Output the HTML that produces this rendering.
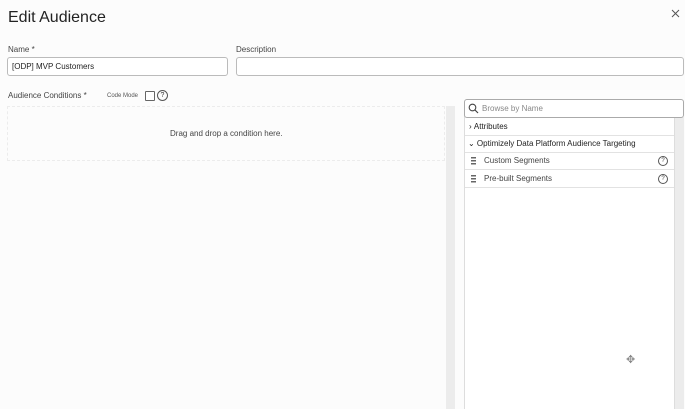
<!DOCTYPE html><html><head><style>
body{margin:0;width:685px;height:409px;background:#fcfcfc;font-family:"Liberation Sans",sans-serif;color:#333;position:relative;overflow:hidden}
.a{position:absolute}
.lbl{font-size:8px;color:#444}
.inp{border:1px solid #bbb;border-radius:3px;background:#fff;box-sizing:border-box}
.row{position:absolute;left:465px;width:209px;height:18px;border-bottom:1px solid #e2e2e2;font-size:8px;line-height:18px;box-sizing:border-box}
.q{position:absolute;right:6px;top:4px;width:8px;height:8px;border:1px solid #555;border-radius:50%;font-size:6px;line-height:8px;text-align:center}
.grip{position:absolute;left:6px;top:5px;width:5px;height:8px;background:repeating-linear-gradient(#666 0 1.5px,transparent 1.5px 3px)}
</style></head><body>
<div class="a" style="left:8px;top:9px;font-size:16px;color:#222">Edit Audience</div>
<svg class="a" style="left:671px;top:9px" width="9" height="9"><path d="M1 1L8 8M8 1L1 8" stroke="#555" stroke-width="1"/></svg>
<div class="a lbl" style="left:8px;top:45px">Name *</div>
<div class="a lbl" style="left:236px;top:45px">Description</div>
<div class="a inp" style="left:7px;top:57px;width:221px;height:19px;font-size:8px;line-height:17px;padding-left:4px;color:#222">[ODP] MVP Customers</div>
<div class="a inp" style="left:236px;top:57px;width:448px;height:19px"></div>
<div class="a lbl" style="left:8px;top:91px">Audience Conditions *</div>
<div class="a" style="left:107px;top:93px;font-size:6px;color:#555">Code Mode</div>
<div class="a" style="left:145px;top:91px;width:8px;height:8px;border:1px solid #666;border-radius:1px;background:#fff"></div>
<div class="a" style="left:157px;top:90px;width:9px;height:9px;border:1px solid #555;border-radius:50%;font-size:7px;line-height:9px;text-align:center">?</div>
<div class="a" style="left:7px;top:106px;width:438px;height:55px;border:1px dashed #ececec;box-sizing:border-box"></div>
<div class="a" style="left:170px;top:129px;font-size:8px;color:#444">Drag and drop a condition here.</div>
<div class="a" style="left:446px;top:106px;width:9px;height:303px;background:#ececec"></div>
<div class="a" style="left:464px;top:106px;width:211px;height:303px;background:#fff;border-left:1px solid #ddd;border-right:1px solid #ddd;box-sizing:border-box"></div>
<div class="a" style="left:675px;top:117px;width:9px;height:292px;background:#ececec"></div>
<div class="a inp" style="left:464px;top:99px;width:220px;height:19px;border-color:#aaa;font-size:8px;line-height:17px;padding-left:17px;color:#888">Browse by Name</div>
<svg class="a" style="left:468px;top:103px" width="11" height="11"><circle cx="4.5" cy="4.5" r="3.3" fill="none" stroke="#444" stroke-width="1.1"/><line x1="7" y1="7" x2="10" y2="10" stroke="#444" stroke-width="1.2"/></svg>
<div class="row" style="top:118px;padding-left:4px;color:#222">›&nbsp;Attributes</div>
<div class="row" style="top:135px;padding-left:3px;color:#222">⌄ Optimizely Data Platform Audience Targeting</div>
<div class="row" style="top:152px;padding-left:19px;color:#444"><span class="grip"></span>Custom Segments<span class="q">?</span></div>
<div class="row" style="top:170px;padding-left:19px;color:#444"><span class="grip"></span>Pre-built Segments<span class="q">?</span></div>
<div class="a" style="left:626px;top:353px;font-size:11px;color:#888">✥</div>
</body></html>
